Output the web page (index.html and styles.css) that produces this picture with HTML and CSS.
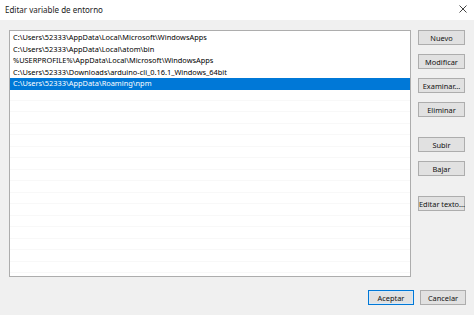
FILE: index.html
```html
<!DOCTYPE html>
<html lang="es">
<head>
    <meta charset="UTF-8">
    <title>Editar variable de entorno</title>
    <link rel="stylesheet" href="styles.css">
</head>
<body>
    <div class="window">
        <div class="titlebar">
            <span class="title">Editar variable de entorno</span>
            <svg class="close" width="8" height="8" viewBox="0 0 8 8">
                <path d="M0.5 0.5 L7.5 7.5 M7.5 0.5 L0.5 7.5" stroke="#444" stroke-width="1" fill="none"/>
            </svg>
        </div>

        <div class="content">
            <div class="list">
                <div class="row">C:\Users\52333\AppData\Local\Microsoft\WindowsApps</div>
                <div class="row">C:\Users\52333\AppData\Local\atom\bin</div>
                <div class="row">%USERPROFILE%\AppData\Local\Microsoft\WindowsApps</div>
                <div class="row">C:\Users\52333\Downloads\arduino-cli_0.16.1_Windows_64bit</div>
                <div class="row selected">C:\Users\52333\AppData\Roaming\npm</div>
            </div>

            <div class="side">
                <button class="btn">Nuevo</button>
                <button class="btn">Modificar</button>
                <button class="btn">Examinar...</button>
                <button class="btn">Eliminar</button>
                <button class="btn group">Subir</button>
                <button class="btn">Bajar</button>
                <button class="btn group">Editar texto...</button>
            </div>
        </div>

        <div class="footer">
            <button class="btn default">Aceptar</button>
            <button class="btn">Cancelar</button>
        </div>
    </div>
</body>
</html>
```

FILE: styles.css
```css
body {
    margin: 0;
    font-family: "Noto Sans", "Open Sans", sans-serif;
    font-size: 8px;
    color: #000;
    background-color: #f0f0f0;
}

.window {
    width: 474px;
    height: 315px;
    display: flex;
    flex-direction: column;
    background-color: #f0f0f0;
}

.titlebar {
    height: 20px;
    background-color: #fff;
    display: flex;
    align-items: center;
    justify-content: space-between;
    padding: 0 7px 2px 5px;
    box-sizing: border-box;
}

.title {
    color: #222;
}

.content {
    display: flex;
    gap: 7px;
    padding: 10px 0 0 9px;
}

.list {
    width: 402px;
    height: 247px;
    box-sizing: border-box;
    border: 1px solid #adadad;
    padding-top: 1px;
    font-size: 7.4px;
    background-color: #fff;
    background-image: repeating-linear-gradient(to bottom, transparent 0, transparent 10.5px, #f8f8f8 10.5px, #f8f8f8 11.5px);
    background-position: 0 1px;
}

.row {
    height: 11.5px;
    line-height: 11.5px;
    padding-left: 3px;
    white-space: nowrap;
    background-color: #fff;
}

.row.selected {
    background-color: #0078d7;
    color: #fff;
}

.side {
    display: flex;
    flex-direction: column;
    gap: 9px;
    width: 47px;
}

.btn {
    height: 15px;
    padding: 0;
    font-family: inherit;
    font-size: 7.4px;
    color: #111;
    white-space: nowrap;
    background-color: #e1e1e1;
    border: 1px solid #adadad;
    border-radius: 0;
}

.side .group {
    margin-top: 11px;
}

.footer {
    display: flex;
    justify-content: flex-end;
    gap: 6px;
    padding: 13px 8px 0 0;
}

.footer .btn {
    width: 46px;
}

.btn.default {
    border-color: #0078d7;
    box-shadow: inset 0 0 0 1px #d9e8f5;
}
```
